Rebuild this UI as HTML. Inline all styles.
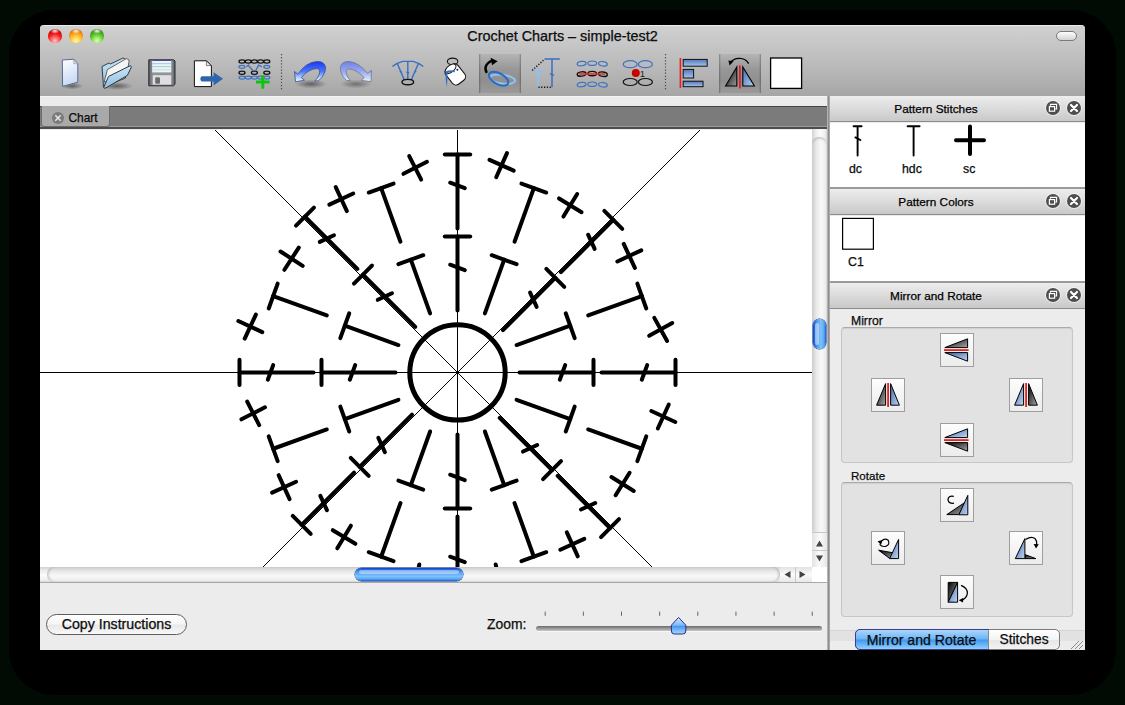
<!DOCTYPE html>
<html><head><meta charset="utf-8">
<style>
*{box-sizing:border-box}
html,body{margin:0;padding:0}
body{width:1125px;height:705px;background:#020a04;position:relative;overflow:hidden;font-family:"Liberation Sans",sans-serif;color:#000;-webkit-text-stroke:0.25px #000}
div{position:absolute}
#shadow{left:9px;top:10px;width:1107px;height:685px;background:#000;border-radius:45px}
#win{left:40px;top:25px;width:1045px;height:625px;background:#ececec;overflow:hidden;border-radius:4px 4px 0 0}
.title{left:40px;top:28px;width:1045px;text-align:center;font-size:14.4px;line-height:17px;color:#111}
.tl{top:29px;width:13.6px;height:13.6px;border-radius:50%}
.sel{top:54px;height:39px;width:42px;background:linear-gradient(90deg,rgba(0,0,0,.28) 0,rgba(0,0,0,0) 2px,rgba(0,0,0,0) 40px,rgba(0,0,0,.28) 42px),linear-gradient(#b4b4b4,#979797 40%,#8f8f8f 70%,#9a9a9a 100%)}
.sep{top:54px;height:37px;width:2px;background:repeating-linear-gradient(#555 0,#555 1.2px,transparent 1.2px,transparent 3.4px)}
.ph{left:830px;width:255px;height:26px;padding-right:43px;background:linear-gradient(#ededed,#c9c9c9);border-bottom:1.5px solid #8c8c8c;font-size:11.8px;text-align:center;line-height:27px;color:#000}
.gl{left:830px;width:255px;height:2px;background:#9a9a9a}
.hb{width:14px;height:14px;border-radius:50%;background:#4e4e4e;box-shadow:0 0 0 1px rgba(255,255,255,.5)}
.lbl{font-size:12.3px;color:#111;line-height:14px}
.box{background:#e2e2e2;border:1px solid #c6c6c6;border-top-color:#aaa;border-radius:4px;box-shadow:inset 0 1px 1px rgba(0,0,0,.08)}
.btn{width:34px;height:34px;background:linear-gradient(#fdfdfd,#ececec);border:1px solid #9e9e9e}
</style></head><body>
<div id="shadow"></div>
<div id="win"></div>
<!-- unified title/toolbar -->
<div style="left:40px;top:25px;width:1045px;height:71px;background:linear-gradient(#d1d1d1 0px,#c7c7c7 18px,#b8b8b8 44px,#a6a6a6 71px);border-radius:4px 4px 0 0"></div>
<div style="left:44px;top:25px;width:1037px;height:1px;background:#ececec"></div>
<div style="left:40px;top:96px;width:788px;height:1px;background:#f4f4f4"></div>
<div class="tl" style="left:48px;background:radial-gradient(ellipse 32% 20% at 50% 14%,rgba(255,255,255,.95),rgba(255,255,255,0) 100%),radial-gradient(circle at 50% 85%,#ffc8c8 0,#ff7a7a 22%,#f51818 52%,#c00808 80%,#7a0606 100%)"></div>
<div class="tl" style="left:69px;background:radial-gradient(ellipse 32% 20% at 50% 14%,rgba(255,255,255,.95),rgba(255,255,255,0) 100%),radial-gradient(circle at 50% 85%,#fff5a0 0,#ffe060 22%,#ffa820 52%,#e06a08 80%,#a03a04 100%)"></div>
<div class="tl" style="left:90px;background:radial-gradient(ellipse 32% 20% at 50% 14%,rgba(255,255,255,.95),rgba(255,255,255,0) 100%),radial-gradient(circle at 50% 85%,#d8ffb0 0,#a6ec78 22%,#58c028 52%,#2c9010 80%,#1a5a08 100%)"></div>
<div class="title">Crochet Charts – simple-test2</div>
<div style="left:1056px;top:31px;width:21px;height:10px;border-radius:5px;border:1px solid #7b7b7b;background:linear-gradient(#fdfdfd,#d4d4d4)"></div>
<div class="sel" style="left:479px"></div>
<div class="sel" style="left:719px"></div>
<svg style="position:absolute;left:0;top:0" width="1125" height="100"><g stroke="#4a4a4a" stroke-width="1.2" stroke-dasharray="1.2 1.9"><line x1="281.5" y1="54" x2="281.5" y2="91"/><line x1="665.5" y1="54" x2="665.5" y2="91"/></g></svg>
<svg style="position:absolute;left:0;top:0" width="1125" height="100" viewBox="0 0 1125 100">
<defs>
<linearGradient id="gdoc" x1="0" y1="0" x2="0.3" y2="1"><stop offset="0" stop-color="#ffffff"/><stop offset="1" stop-color="#c9d8f4"/></linearGradient>
<linearGradient id="gfold" x1="0" y1="0" x2="0" y2="1"><stop offset="0" stop-color="#c9e6f7"/><stop offset="1" stop-color="#8fbfdc"/></linearGradient>
<linearGradient id="gflop" x1="0" y1="0" x2="1" y2="0"><stop offset="0" stop-color="#5c6068"/><stop offset=".15" stop-color="#8e929a"/><stop offset=".85" stop-color="#90949c"/><stop offset="1" stop-color="#5a5e66"/></linearGradient>
<linearGradient id="gundo" x1="0" y1="0" x2="0" y2="1"><stop offset="0" stop-color="#1a36f0"/><stop offset=".5" stop-color="#4a78ff"/><stop offset=".8" stop-color="#b8d4ff"/><stop offset="1" stop-color="#eef6ff"/></linearGradient>
<linearGradient id="gredo" x1="0" y1="0" x2="0" y2="1"><stop offset="0" stop-color="#6f80e6"/><stop offset=".5" stop-color="#98aaee"/><stop offset=".8" stop-color="#c8d6f4"/><stop offset="1" stop-color="#eef2fa"/></linearGradient>
<linearGradient id="gbar" x1="0" y1="0" x2="0" y2="1"><stop offset="0" stop-color="#4f78bb"/><stop offset="1" stop-color="#a9c3e8"/></linearGradient>
<linearGradient id="gtriL" x1="0" y1="0" x2="1" y2="1"><stop offset="0" stop-color="#000"/><stop offset="1" stop-color="#9a9a9a"/></linearGradient>
<linearGradient id="gtriR" x1="0" y1="0" x2="1" y2="1"><stop offset="0" stop-color="#3e6cb4"/><stop offset="1" stop-color="#b9d0ef"/></linearGradient>
<radialGradient id="gsh"><stop offset="0" stop-color="#000" stop-opacity=".45"/><stop offset="1" stop-color="#000" stop-opacity="0"/></radialGradient>
</defs>
<!-- 1 new doc -->
<ellipse cx="72" cy="86" rx="11" ry="3.5" fill="url(#gsh)"/>
<path d="M62.3,60 L73.8,59.2 L77.8,63.6 L77.8,82.2 L62.6,86.4 Z" fill="url(#gdoc)" stroke="#556b94" stroke-width="1"/>
<path d="M73.6,59.6 L73.8,63.8 L77.5,63.6 Z" fill="#d8d8d8" stroke="#8c96aa" stroke-width=".6"/>
<!-- 2 folder -->
<ellipse cx="117" cy="86" rx="16" ry="4" fill="url(#gsh)"/>
<path d="M102,66.5 L109,63 L110.5,64 L123,58 L125.5,59.3 L125.5,78 L103.5,87 Z" fill="url(#gfold)" stroke="#3a3f46" stroke-width="1"/>
<path d="M104.2,82 L107.4,69.6 L126.4,58.6 L129.2,60 L127.4,72.4 L110,80.4 Z" fill="#f4f4f4" stroke="#444" stroke-width=".8"/>
<path d="M103.6,87.4 L108.6,76.4 L130.4,65.6 L131.4,67 L127.4,75.4 L105,88.4 Z" fill="url(#gfold)" stroke="#33383f" stroke-width="1"/>
<!-- 3 floppy -->
<path d="M148.8,59.8 L173.8,59.8 L175,61 L175,84.2 L173.3,85.8 L148.8,85.8 Z" fill="url(#gflop)" stroke="#26282c" stroke-width="1"/>
<rect x="152.2" y="60" width="19" height="12.4" fill="#f2f2f2"/>
<rect x="152.2" y="60" width="19" height="1" fill="#5b3fb5"/>
<rect x="152.2" y="63" width="19" height="1.2" fill="#9fd7df"/>
<rect x="152.2" y="66" width="19" height="1.2" fill="#9fd7df"/>
<rect x="152.2" y="69.2" width="19" height="1.2" fill="#b8e6ea"/>
<rect x="152.8" y="75.2" width="18.4" height="9.4" fill="#dedede"/>
<rect x="155.2" y="77.3" width="4.8" height="6.4" rx="1.2" fill="#6b6b6b"/>
<!-- 4 export -->
<path d="M194.4,60.8 L206.6,60.8 L211.4,65.6 L211.4,86.6 L194.4,86.6 Z" fill="#fff" stroke="#111" stroke-width="1"/>
<path d="M206.4,61 L206.4,65.6 L211,65.6 Z" fill="#e8e8e8" stroke="#333" stroke-width=".6"/>
<path d="M201.6,76.2 L213.6,76.2 L213.6,72.2 L223,78.8 L213.6,85.4 L213.6,81.4 L201.6,81.4 Q199,78.8 201.6,76.2 Z" fill="#2f65ae"/>
<!-- 5 rows + -->
<g fill="none" stroke-width="1.3">
<g stroke="#111"><ellipse cx="242" cy="61.5" rx="3" ry="1.6"/><ellipse cx="248.2" cy="61.5" rx="3" ry="1.6"/><ellipse cx="254.4" cy="61.5" rx="3" ry="1.6"/><ellipse cx="260.6" cy="61.5" rx="3" ry="1.6"/><ellipse cx="266.8" cy="61.5" rx="3" ry="1.6"/>
<ellipse cx="242" cy="72.7" rx="3" ry="1.6"/><ellipse cx="254.4" cy="72.7" rx="3" ry="1.6"/><ellipse cx="266.8" cy="72.7" rx="3" ry="1.6"/></g>
<g stroke="#3f73c0"><ellipse cx="242" cy="66.8" rx="3" ry="1.5"/><ellipse cx="266.8" cy="66.8" rx="3" ry="1.5"/>
<ellipse cx="242" cy="77.6" rx="3" ry="1.5"/><ellipse cx="248.2" cy="77.6" rx="3" ry="1.5"/><ellipse cx="254.4" cy="77.6" rx="3" ry="1.5"/><ellipse cx="260.6" cy="77.6" rx="3" ry="1.5"/><ellipse cx="266.8" cy="77.6" rx="3" ry="1.5"/>
<path d="M246.5,66.8 L249,64.5 M248.2,65.2 L253.4,71.2 M255.4,71.2 L258.6,65.2 L261.8,66.8"/></g>
</g>
<path d="M261.3,75.2 h3 v5.3 h5.3 v3 h-5.3 v5.3 h-3 v-5.3 h-5.3 v-3 h5.3 Z" fill="#12c212"/>
<!-- 6 undo -->
<ellipse cx="311" cy="84" rx="16" ry="4.5" fill="url(#gsh)"/>
<path d="M294.5,71.5 L295.5,81.8 L304.5,80.2 L301.2,77.6 Q309,68.5 317.5,68.6 Q320.5,69.5 319.4,74 Q317.6,78.5 314.8,81 L318.4,80.8 Q325.6,74.6 325.6,67.4 Q324.5,61.2 316.8,61.5 Q305.8,62.3 297.9,74.2 Z" fill="url(#gundo)" stroke="#3d4f86" stroke-width=".8"/>
<!-- 7 redo -->
<ellipse cx="356" cy="84" rx="16" ry="4.5" fill="url(#gsh)" opacity=".8"/>
<path d="M371.5,70.5 L371,81.6 L361.2,80.4 L364.3,77.6 Q356.8,69.5 348.5,68.8 Q345.4,69.5 346.4,74 Q348,78.6 350.6,80.6 L346.4,80.4 Q340.2,74.6 340.4,67.4 Q341.5,61.2 349.2,61.5 Q359,62.4 367.4,73.4 Z" fill="url(#gredo)" stroke="#6c7594" stroke-width=".8"/>
<!-- 8 fan -->
<g fill="none" stroke="#3a6fc2" stroke-width="1.4">
<path d="M392.4,66.5 Q397,62.8 402.6,61.4 L413.1,61.4 Q418.8,62.8 423.3,66.5"/>
<path d="M397.5,64 L404.2,79.6 M407.8,61.4 L407.8,79.2 M418.2,64 L411.4,79.6"/>
<path d="M399.8,71.2 L401.8,72.4 M406.4,72.2 L409.2,73 M414.2,72.4 L416.2,71.2"/>
</g>
<ellipse cx="407.8" cy="82.1" rx="5.8" ry="2.7" fill="none" stroke="#111" stroke-width="1.4"/>
<!-- 9 bucket -->
<ellipse cx="452.6" cy="61.4" rx="5.2" ry="3.3" fill="none" stroke="#111" stroke-width="1.1"/>
<rect x="447.6" y="64.6" width="15.4" height="19.6" rx="4.6" transform="rotate(-38 455.3 74.4)" fill="#fff" stroke="#111" stroke-width="1.1"/>
<ellipse cx="450.6" cy="68.8" rx="6.4" ry="3.4" transform="rotate(-38 450.6 68.8)" fill="#fff" stroke="#111" stroke-width="1"/>
<path d="M445.6,71.4 Q449.6,69.6 455,70.6 L454.6,72.2 Q450,71.6 447.6,73 L447,87.6 Q445.2,80.4 445.6,71.4 Z" fill="#3b6fc4"/>
<circle cx="457.4" cy="69.8" r="1" fill="#223"/>
<!-- 10 rotate -->
<path d="M486.8,72.8 Q482.6,65.4 491.6,60.8" fill="none" stroke="#000" stroke-width="2.4"/>
<path d="M490.6,57.8 L497.6,61.2 L492,65.2 Z" fill="#000"/>
<ellipse cx="502.6" cy="79.2" rx="12.6" ry="4.4" transform="rotate(8 502.6 79.2)" fill="none" stroke="#8fc3f5" stroke-width="2"/>
<ellipse cx="498.6" cy="78.8" rx="10.6" ry="5.4" transform="rotate(28 498.6 78.8)" fill="none" stroke="#2e6ec2" stroke-width="2.1"/>
<!-- 11 dc dotted -->
<g fill="none" stroke-width="1.5">
<path d="M544.8,59 L559.8,59 M552,59 L552,87.2 M550,73.6 L554,75.4" stroke="#3a6fc2"/>
<path d="M532.2,70.4 L544.2,70.4 M538.2,70.4 L538.2,87.2 M536.2,76.6 L540.2,77.6" stroke="#8cc0f4"/>
<path d="M532.2,70.4 L544.8,59 M538.4,87.2 L552,87.2" stroke="#111" stroke-dasharray="1.2 1.6"/>
</g>
<!-- 12 ovals red -->
<g fill="none" stroke-width="1.2">
<g stroke="#3f73c0"><ellipse cx="581.6" cy="63.6" rx="4.4" ry="2.2" transform="rotate(-8 581.6 63.6)"/><ellipse cx="592.2" cy="63.2" rx="4.4" ry="2.2"/><ellipse cx="602.9" cy="63.8" rx="4.4" ry="2.2" transform="rotate(8 602.9 63.8)"/>
<ellipse cx="581.6" cy="84.6" rx="4.4" ry="2.2" transform="rotate(-8 581.6 84.6)"/><ellipse cx="592.2" cy="84.2" rx="4.4" ry="2.2"/><ellipse cx="602.9" cy="84.8" rx="4.4" ry="2.2" transform="rotate(8 602.9 84.8)"/></g>
<g stroke="#111" stroke-width="1.4"><ellipse cx="581.6" cy="74" rx="4.4" ry="2.2" transform="rotate(-8 581.6 74)"/><ellipse cx="592.2" cy="73.6" rx="4.4" ry="2.2"/><ellipse cx="602.9" cy="74.2" rx="4.4" ry="2.2" transform="rotate(8 602.9 74.2)"/></g>
<path d="M579,74 L605,74" stroke="#f0262a" stroke-width="1.5"/>
</g>
<!-- 13 ovals dot -->
<g fill="none" stroke-width="1.2">
<g stroke="#3f73c0"><ellipse cx="630.2" cy="64.2" rx="7" ry="3.5"/><ellipse cx="645.4" cy="64.2" rx="7" ry="3.5"/></g>
<g stroke="#111"><ellipse cx="630.2" cy="82" rx="7" ry="3.5"/><ellipse cx="645.4" cy="82" rx="7" ry="3.5"/></g>
</g>
<circle cx="635.8" cy="72.9" r="4" fill="#cc0000"/>
<text x="639.8" y="77.2" font-family="Liberation Sans" font-size="9.6" fill="#222" style="-webkit-text-stroke:0">1</text>
<!-- 14 align left -->
<rect x="679.6" y="58" width="1.6" height="30" fill="#ee1c1c"/>
<rect x="683.2" y="59.4" width="24" height="6.8" fill="url(#gbar)" stroke="#111" stroke-width="1"/>
<rect x="683.2" y="69.4" width="10.4" height="8.6" fill="url(#gbar)" stroke="#111" stroke-width="1"/>
<rect x="683.2" y="81.2" width="19.8" height="5.5" fill="url(#gbar)" stroke="#111" stroke-width="1"/>
<!-- 15 mirror -->
<path d="M729.8,63.6 Q733,58.2 739.6,58.4 Q746,58.6 748.6,63.6" fill="none" stroke="#000" stroke-width="1.4"/>
<path d="M728.4,60.6 L733.6,61.2 L729.6,65.6 Z" fill="#000"/>
<path d="M725.6,86 L736.8,67 L736.8,86 Z" fill="url(#gtriL)" stroke="#000" stroke-width="1.1"/>
<path d="M742.8,67 L742.8,86 L754.4,86 Z" fill="url(#gtriR)" stroke="#000" stroke-width="1.1"/>
<rect x="739" y="65.4" width="1.8" height="23" fill="#ee1c1c"/>
<!-- 16 white square -->
<rect x="770.6" y="58" width="31" height="30.4" fill="#fff" stroke="#000" stroke-width="1.3"/>
</svg>

<!-- tab bar -->
<div style="left:40px;top:106px;width:787px;height:23px;background:#7b7b7b;border-top:1px solid #474747;border-bottom:2px solid #4c4c4c"></div>
<div style="left:40px;top:126px;width:788px;height:1px;background:#9a9a9a"></div>
<div style="left:40.5px;top:106px;width:69px;height:21px;background:#a9a9a9;border-radius:0 0 3px 3px;border:1px solid #6c6c6c;border-top:none"></div>
<div style="left:52px;top:112px;width:12px;height:12px;border-radius:50%;background:#7b7b7b"></div>
<svg style="position:absolute;left:52px;top:112px" width="12" height="12"><path d="M3.3,3.3L8.7,8.7M8.7,3.3L3.3,8.7" stroke="#e8e8e8" stroke-width="1.5"/></svg>
<div style="left:68.5px;top:111px;font-size:11.9px;line-height:14px;color:#111">Chart</div>
<svg style="position:absolute;left:0;top:0" width="1125" height="705" viewBox="0 0 1125 705">
<defs><clipPath id="cv"><rect x="40" y="130" width="772" height="437"/></clipPath></defs>
<g clip-path="url(#cv)">
<rect x="40" y="130" width="772" height="437" fill="#fff"/>
<rect x="40" y="372" width="772" height="1" fill="#000"/><rect x="457" y="130" width="1" height="437" fill="#000"/><g stroke="#000" stroke-width="1" shape-rendering="crispEdges"><line x1="157.5" y1="72.39999999999998" x2="757.5" y2="672.4"/><line x1="157.5" y1="672.4" x2="757.5" y2="72.39999999999998"/></g>
<circle cx="457.5" cy="372.4" r="47.7" fill="none" stroke="#000" stroke-width="5"/>
<g stroke="#000" stroke-width="4" stroke-linecap="round" fill="none"><line x1="457.50" y1="236.40" x2="457.50" y2="310.40"/><line x1="444.80" y1="236.40" x2="470.20" y2="236.40"/><line x1="450.17" y1="264.70" x2="464.83" y2="270.10"/><line x1="457.50" y1="154.40" x2="457.50" y2="228.40"/><line x1="444.80" y1="154.40" x2="470.20" y2="154.40"/><line x1="450.17" y1="182.70" x2="464.83" y2="188.10"/><line x1="504.19" y1="259.69" x2="484.88" y2="313.32"/><line x1="491.77" y1="255.22" x2="516.61" y2="264.16"/><line x1="533.85" y1="188.09" x2="514.54" y2="241.72"/><line x1="521.43" y1="183.61" x2="546.26" y2="192.56"/><line x1="555.29" y1="277.86" x2="502.97" y2="330.19"/><line x1="546.31" y1="268.88" x2="564.27" y2="286.84"/><line x1="530.10" y1="292.69" x2="536.65" y2="306.87"/><line x1="613.28" y1="219.88" x2="560.95" y2="272.20"/><line x1="604.30" y1="210.90" x2="622.26" y2="228.86"/><line x1="588.08" y1="234.71" x2="594.63" y2="248.89"/><line x1="570.21" y1="325.71" x2="516.58" y2="345.02"/><line x1="565.74" y1="313.29" x2="574.68" y2="338.13"/><line x1="641.81" y1="296.05" x2="588.18" y2="315.36"/><line x1="637.34" y1="283.64" x2="646.29" y2="308.47"/><line x1="593.50" y1="372.40" x2="519.50" y2="372.40"/><line x1="593.50" y1="359.70" x2="593.50" y2="385.10"/><line x1="565.20" y1="365.07" x2="559.80" y2="379.73"/><line x1="675.50" y1="372.40" x2="601.50" y2="372.40"/><line x1="675.50" y1="359.70" x2="675.50" y2="385.10"/><line x1="647.20" y1="365.07" x2="641.80" y2="379.73"/><line x1="570.21" y1="419.09" x2="516.58" y2="399.78"/><line x1="574.68" y1="406.67" x2="565.74" y2="431.51"/><line x1="641.81" y1="448.75" x2="588.18" y2="429.44"/><line x1="646.29" y1="436.33" x2="637.34" y2="461.16"/><line x1="552.04" y1="470.19" x2="499.71" y2="417.87"/><line x1="561.02" y1="461.21" x2="543.06" y2="479.17"/><line x1="537.21" y1="445.00" x2="523.03" y2="451.55"/><line x1="610.02" y1="528.18" x2="557.70" y2="475.85"/><line x1="619.00" y1="519.20" x2="601.04" y2="537.16"/><line x1="595.19" y1="502.98" x2="581.01" y2="509.53"/><line x1="504.19" y1="485.11" x2="484.88" y2="431.48"/><line x1="516.61" y1="480.64" x2="491.77" y2="489.58"/><line x1="533.85" y1="556.71" x2="514.54" y2="503.08"/><line x1="546.26" y1="552.24" x2="521.43" y2="561.19"/><line x1="457.50" y1="508.40" x2="457.50" y2="434.40"/><line x1="470.20" y1="508.40" x2="444.80" y2="508.40"/><line x1="464.83" y1="480.10" x2="450.17" y2="474.70"/><line x1="457.50" y1="590.40" x2="457.50" y2="516.40"/><line x1="470.20" y1="590.40" x2="444.80" y2="590.40"/><line x1="464.83" y1="562.10" x2="450.17" y2="556.70"/><line x1="410.81" y1="485.11" x2="430.12" y2="431.48"/><line x1="423.23" y1="489.58" x2="398.39" y2="480.64"/><line x1="381.15" y1="556.71" x2="400.46" y2="503.08"/><line x1="393.57" y1="561.19" x2="368.74" y2="552.24"/><line x1="359.71" y1="466.94" x2="412.03" y2="414.61"/><line x1="368.69" y1="475.92" x2="350.73" y2="457.96"/><line x1="384.90" y1="452.11" x2="378.35" y2="437.93"/><line x1="301.72" y1="524.92" x2="354.05" y2="472.60"/><line x1="310.70" y1="533.90" x2="292.74" y2="515.94"/><line x1="326.92" y1="510.09" x2="320.37" y2="495.91"/><line x1="344.79" y1="419.09" x2="398.42" y2="399.78"/><line x1="349.26" y1="431.51" x2="340.32" y2="406.67"/><line x1="273.19" y1="448.75" x2="326.82" y2="429.44"/><line x1="277.66" y1="461.16" x2="268.71" y2="436.33"/><line x1="321.50" y1="372.40" x2="395.50" y2="372.40"/><line x1="321.50" y1="385.10" x2="321.50" y2="359.70"/><line x1="349.80" y1="379.73" x2="355.20" y2="365.07"/><line x1="239.50" y1="372.40" x2="313.50" y2="372.40"/><line x1="239.50" y1="385.10" x2="239.50" y2="359.70"/><line x1="267.80" y1="379.73" x2="273.20" y2="365.07"/><line x1="344.79" y1="325.71" x2="398.42" y2="345.02"/><line x1="340.32" y1="338.13" x2="349.26" y2="313.29"/><line x1="273.19" y1="296.05" x2="326.82" y2="315.36"/><line x1="268.71" y1="308.47" x2="277.66" y2="283.64"/><line x1="362.96" y1="274.61" x2="415.29" y2="326.93"/><line x1="353.98" y1="283.59" x2="371.94" y2="265.63"/><line x1="377.79" y1="299.80" x2="391.97" y2="293.25"/><line x1="304.98" y1="216.62" x2="357.30" y2="268.95"/><line x1="296.00" y1="225.60" x2="313.96" y2="207.64"/><line x1="319.81" y1="241.82" x2="333.99" y2="235.27"/><line x1="410.81" y1="259.69" x2="430.12" y2="313.32"/><line x1="398.39" y1="264.16" x2="423.23" y2="255.22"/><line x1="381.15" y1="188.09" x2="400.46" y2="241.72"/><line x1="368.74" y1="192.56" x2="393.57" y2="183.61"/><line x1="421.19" y1="179.56" x2="409.21" y2="156.04"/><line x1="403.44" y1="173.79" x2="426.96" y2="161.81"/><line x1="346.88" y1="211.06" x2="335.72" y2="187.14"/><line x1="329.34" y1="204.68" x2="353.26" y2="193.52"/><line x1="302.67" y1="265.89" x2="280.53" y2="251.51"/><line x1="284.41" y1="269.77" x2="298.79" y2="247.63"/><line x1="262.26" y1="332.18" x2="238.34" y2="321.02"/><line x1="244.72" y1="338.56" x2="255.88" y2="314.64"/><line x1="496.23" y1="177.26" x2="506.97" y2="153.14"/><line x1="489.54" y1="159.83" x2="513.66" y2="170.57"/><line x1="563.42" y1="216.57" x2="577.18" y2="194.03"/><line x1="559.03" y1="198.42" x2="581.57" y2="212.18"/><line x1="617.34" y1="261.48" x2="641.26" y2="250.32"/><line x1="623.72" y1="243.94" x2="634.88" y2="267.86"/><line x1="649.16" y1="335.80" x2="672.24" y2="323.00"/><line x1="654.30" y1="317.86" x2="667.10" y2="340.94"/><line x1="259.19" y1="425.06" x2="247.21" y2="401.54"/><line x1="241.44" y1="419.29" x2="264.96" y2="407.31"/><line x1="289.59" y1="499.20" x2="278.61" y2="475.20"/><line x1="272.10" y1="492.69" x2="296.10" y2="481.71"/><line x1="337.30" y1="548.31" x2="350.90" y2="525.69"/><line x1="332.79" y1="530.20" x2="355.41" y2="543.80"/><line x1="657.83" y1="428.51" x2="668.77" y2="404.49"/><line x1="651.29" y1="411.03" x2="675.31" y2="421.97"/><line x1="615.61" y1="495.19" x2="629.59" y2="472.81"/><line x1="611.41" y1="477.01" x2="633.79" y2="490.99"/><line x1="577.79" y1="556.30" x2="566.81" y2="532.30"/><line x1="560.30" y1="549.79" x2="584.30" y2="538.81"/><line x1="495.70" y1="564.44" x2="500.85" y2="590.33"/><line x1="511.22" y1="574.81" x2="485.33" y2="579.96"/><line x1="419.30" y1="564.44" x2="414.15" y2="590.33"/><line x1="429.67" y1="579.96" x2="403.78" y2="574.81"/></g>
</g></svg>
<!-- scrollbars -->
<div style="left:812px;top:129px;width:15px;height:438px;background:linear-gradient(90deg,#d2d2d2,#ececec 25%,#fbfbfb 55%,#f0f0f0 85%,#d8d8d8)"></div>
<div style="left:812px;top:137px;width:15px;height:398px;border-radius:7px;background:linear-gradient(90deg,#cdcdcd,#e9e9e9 30%,#f8f8f8 60%,#ededed 90%,#d5d5d5);box-shadow:inset 0 3px 3px -2px rgba(0,0,0,.25)"></div>
<div style="left:813px;top:319px;width:13px;height:30px;border-radius:6.5px;background:linear-gradient(90deg,#0f45c8,#4f9bf0 30%,#7dc2fb 60%,#5aa8f3 85%,#1f5ad6);box-shadow:0 0 0 .5px #123c9a"></div>
<div style="left:815px;top:323px;width:4px;height:22px;border-radius:2px;background:rgba(255,255,255,.45)"></div>
<div style="left:812px;top:532px;width:15px;height:35px;background:linear-gradient(90deg,#e2e2e2,#fbfbfb 50%,#e8e8e8);border-top:1px solid #c8c8c8"></div>
<div style="left:812px;top:550px;width:15px;height:1px;background:#c8c8c8"></div>
<svg style="position:absolute;left:812px;top:536px" width="15" height="30"><path d="M4,10.5 L11,10.5 L7.5,4.5Z M4,19.5 L11,19.5 L7.5,25.5Z" fill="#444"/></svg>
<div style="left:40px;top:567px;width:772px;height:15px;background:linear-gradient(#d2d2d2,#ececec 25%,#fbfbfb 55%,#f0f0f0 85%,#d8d8d8)"></div>
<div style="left:47px;top:567px;width:733px;height:15px;border-radius:7px;background:linear-gradient(#cdcdcd,#e9e9e9 30%,#f8f8f8 60%,#ededed 90%,#d5d5d5);box-shadow:inset 3px 0 3px -2px rgba(0,0,0,.25),inset -3px 0 3px -2px rgba(0,0,0,.25)"></div>
<div style="left:355px;top:568px;width:108px;height:13px;border-radius:6.5px;background:linear-gradient(#0d44c6,#4f9bf0 30%,#7dc2fb 65%,#5aa8f3 85%,#1f5ad6);box-shadow:0 0 0 .5px #123c9a"></div>
<div style="left:359px;top:569.5px;width:100px;height:4px;border-radius:2px;background:rgba(255,255,255,.42)"></div>
<div style="left:780px;top:567px;width:32px;height:15px;background:linear-gradient(#e2e2e2,#fbfbfb 50%,#e8e8e8)"></div>
<div style="left:795px;top:567px;width:1px;height:15px;background:#c8c8c8"></div>
<svg style="position:absolute;left:780px;top:567px" width="32" height="15"><path d="M10.5,4 L10.5,11 L4.5,7.5Z M19.5,4 L19.5,11 L25.5,7.5Z" fill="#444"/></svg>
<div style="left:812px;top:567px;width:15px;height:15px;background:#fff"></div>
<div style="left:40px;top:582px;width:788px;height:1px;background:#a9a9a9"></div>
<!-- panel divider -->
<div style="left:827px;top:96px;width:3px;height:554px;background:linear-gradient(90deg,#b4b4b4 0,#b4b4b4 33%,#8e8e8e 33%,#8e8e8e 80%,#a8a8a8 80%)"></div>
<!-- right panel -->
<div class="ph" style="top:96px">Pattern Stitches</div>
<div style="left:830px;top:122.5px;width:255px;height:64.5px;background:#fff"></div>
<div class="gl" style="top:187px"></div>
<div class="ph" style="top:189px">Pattern Colors</div>
<div style="left:830px;top:215.5px;width:255px;height:65.5px;background:#fff"></div>
<div class="gl" style="top:281px"></div>
<div class="ph" style="top:283px">Mirror and Rotate</div>
<div style="left:830px;top:309.5px;width:255px;height:340.5px;background:#ececec"></div>
<!-- header buttons -->
<div class="hb" style="left:1046px;top:101px"></div><div class="hb" style="left:1067px;top:101px"></div>
<div class="hb" style="left:1046px;top:194px"></div><div class="hb" style="left:1067px;top:194px"></div>
<div class="hb" style="left:1046px;top:288px"></div><div class="hb" style="left:1067px;top:288px"></div>
<svg style="position:absolute;left:0;top:0" width="1125" height="705" viewBox="0 0 1125 705">
<defs>
<g id="flt"><path d="M-2.6,-2.2 L-2.6,-3.6 L3.6,-3.6 L3.6,1 L2.2,1" fill="none" stroke="#fff" stroke-width="1.1"/><rect x="-3.6" y="-1.4" width="5.2" height="4.6" fill="none" stroke="#fff" stroke-width="1.2"/></g>
<g id="cls"><path d="M-3,-3 L3,3 M3,-3 L-3,3" stroke="#fff" stroke-width="2.2" stroke-linecap="round"/></g>
<linearGradient id="mL" x1="0" y1="0" x2="1" y2="1"><stop offset="0" stop-color="#000"/><stop offset="1" stop-color="#aaa"/></linearGradient>
<linearGradient id="mR" x1="0" y1="0" x2="1" y2="1"><stop offset="0" stop-color="#3966b0"/><stop offset="1" stop-color="#c4d6f0"/></linearGradient>
</defs>
<use href="#flt" x="1053" y="108"/><use href="#cls" x="1074" y="108"/>
<use href="#flt" x="1053" y="201"/><use href="#cls" x="1074" y="201"/>
<use href="#flt" x="1053" y="295"/><use href="#cls" x="1074" y="295"/>
<!-- stitches panel -->
<g stroke="#000" fill="none" stroke-linecap="round">
<path d="M853.6,126.3 L861.6,126.3 M857.6,126.3 L857.6,155.6 M855.4,137.4 L860.4,140" stroke-width="1.9"/>
<path d="M907.6,126.3 L919.6,126.3 M913.6,126.3 L913.6,155.6" stroke-width="1.9"/>
<path d="M956,140.2 L984,140.2 M970,126.6 L970,154" stroke-width="4"/>
</g>
<!-- C1 swatch -->
<rect x="842.6" y="218.4" width="30.8" height="30.8" fill="#fff" stroke="#000" stroke-width="1.2"/>
</svg>
<div class="lbl" style="left:849px;top:162px">dc</div>
<div class="lbl" style="left:902px;top:162px">hdc</div>
<div class="lbl" style="left:963px;top:162px">sc</div>
<div class="lbl" style="left:848px;top:255px">C1</div>
<!-- mirror group -->
<div class="lbl" style="left:851px;top:314px;font-size:12.2px">Mirror</div>
<div class="box" style="left:841px;top:326.8px;width:232px;height:136px"></div>
<div class="btn" style="left:940px;top:333px"></div>
<div class="btn" style="left:871px;top:378px"></div>
<div class="btn" style="left:1009px;top:378px"></div>
<div class="btn" style="left:940px;top:423px"></div>
<div class="lbl" style="left:851px;top:469px;font-size:11.6px">Rotate</div>
<div class="box" style="left:841px;top:482px;width:232px;height:135px"></div>
<div class="btn" style="left:940px;top:487.5px"></div>
<div class="btn" style="left:871px;top:531px"></div>
<div class="btn" style="left:1009px;top:531px"></div>
<div class="btn" style="left:940px;top:575px"></div>
<svg style="position:absolute;left:0;top:0" width="1125" height="705" viewBox="0 0 1125 705">
<g stroke="#000" stroke-width="1">
<!-- mirror top: triangles pointing left, horizontal red line -->
<path d="M944.8,347.6 L967.6,338.8 L967.6,347.6 Z" fill="url(#mL)"/>
<path d="M944.8,352.6 L967.6,352.6 L967.6,361.2 Z" fill="url(#mR)"/>
<!-- mirror bottom -->
<path d="M944.8,437.6 L967.6,428.8 L967.6,437.6 Z" fill="url(#mR)"/>
<path d="M944.8,442.6 L967.6,442.6 L967.6,451.2 Z" fill="url(#mL)"/>
<!-- mirror left -->
<path d="M876.6,405.2 L885.6,383.6 L885.6,405.2 Z" fill="url(#mL)"/>
<path d="M890.6,383.6 L890.6,405.2 L899.4,405.2 Z" fill="url(#mR)"/>
<!-- mirror right -->
<path d="M1014.6,405.2 L1023.6,383.6 L1023.6,405.2 Z" fill="url(#mR)"/>
<path d="M1028.6,383.6 L1028.6,405.2 L1037.4,405.2 Z" fill="url(#mL)"/>
</g>
<g fill="#e8201c">
<rect x="944" y="349.2" width="24.6" height="1.8"/>
<rect x="944" y="439.2" width="24.6" height="1.8"/>
<rect x="887.2" y="383" width="1.8" height="24"/>
<rect x="1025.2" y="383" width="1.8" height="24"/>
</g>
<!-- rotate icons -->
<g stroke="#000" stroke-width="1" stroke-linejoin="round">
<path d="M946.8,514.6 L965.8,501.8 L958.8,514.6 Z" fill="url(#mL)"/>
<path d="M958.8,514.8 L967.8,495.4 L967.8,514.8 Z" fill="url(#mR)"/>
<path d="M953.8,496.4 Q948,495.4 948,499.8 Q948.4,503.8 954,503.2" fill="none" stroke-width="1.3"/>
<path d="M878.6,550.2 L897.6,553.6 L889.6,558.4 Z" fill="url(#mL)"/>
<path d="M889.6,558.6 L898.6,539.4 L898.6,558.6 Z" fill="url(#mR)"/>
<path d="M881.4,541.2 Q884.8,537.4 888.2,540.2 Q890.4,544.6 885.6,546.4 Q881.6,547 879.6,544.4" fill="none" stroke-width="1.2"/>
<path d="M1024.9,554.6 L1035.8,558.6 L1024.9,558.6 Z" fill="url(#mL)"/>
<path d="M1015.3,558.6 L1024.9,538.6 L1024.9,558.6 Z" fill="url(#mR)"/>
<path d="M1025.6,539.6 Q1031.6,535.4 1035.2,538.8 Q1037.4,541.4 1036.4,545" fill="none" stroke-width="1.2"/>
<path d="M948.2,582.4 L957.6,582.4 L948.2,602.2 Z" fill="url(#mL)"/>
<path d="M957.6,582.4 L957.6,602.2 L948.2,602.2 Z" fill="url(#mR)"/>
<path d="M961,585.4 Q967.6,588 967.4,593.4 Q966.6,598.6 961.4,600.4" fill="none" stroke-width="1.2"/>
</g>
<g fill="#000">
<path d="M877.6,541.2 L882.6,540 L881,545 Z"/>
<path d="M1033.6,544 L1038.8,544.2 L1036,548.6 Z"/>
<path d="M963.4,597.8 L963,602.6 L958.8,600.2 Z"/>
</g>
<!-- resize grip -->
<g stroke="#8a8a8a" stroke-width="1">
<path d="M1071,649 L1083,637 M1075,649 L1083,641 M1079,649 L1083,645"/>
</g>
</svg>
<!-- segmented control -->
<div style="left:830px;top:629.5px;width:255px;height:11px;background:#e2e2e2;border-top:1px solid #d4d4d4"></div>
<div style="left:855px;top:629px;width:205px;height:21px;border:1px solid #7b7b7b;border-radius:5px;background:linear-gradient(#ffffff,#f4f4f4 50%,#e6e6e6 51%,#f3f3f3)"></div>
<div style="left:856px;top:630px;width:132px;height:19px;border-radius:4px 0 0 4px;background:linear-gradient(#a9d6fb,#6db5f5 48%,#3e97ef 52%,#8fd0fb)"></div>
<div style="left:855px;top:629px;width:134px;height:21px;border:1px solid #3d3c8f;border-radius:5px 0 0 5px"></div>
<div style="left:988px;top:630px;width:1px;height:19px;background:#8a8a8a"></div>
<div style="left:855px;top:631.5px;width:133px;text-align:center;font-size:14.1px;line-height:16px;color:#111">Mirror and Rotate</div>
<div style="left:988px;top:631.5px;width:72px;text-align:center;font-size:13.8px;line-height:16px;color:#111">Stitches</div>

<!-- bottom -->
<div style="left:46px;top:614px;width:141px;height:21px;border-radius:10.5px;border:1px solid #5e5e5e;background:linear-gradient(#ffffff,#f6f6f6 45%,#e9e9e9 55%,#f4f4f4 90%,#fafafa);font-size:14.2px;text-align:center;line-height:19px;color:#111">Copy Instructions</div>
<div style="left:487px;top:616px;font-size:13.9px;line-height:16px;color:#111">Zoom:</div>
<div style="left:536px;top:625.5px;width:286px;height:5px;border-radius:2.5px;background:linear-gradient(#6a6a6a,#9a9a9a 50%,#c8c8c8);box-shadow:0 1px 0 #f8f8f8"></div>
<svg style="position:absolute;left:0;top:0" width="1125" height="705" viewBox="0 0 1125 705">
<defs><linearGradient id="gth" x1="0" y1="0" x2="0" y2="1"><stop offset="0" stop-color="#d6ecff"/><stop offset=".45" stop-color="#7fbdf8"/><stop offset=".55" stop-color="#4b9af0"/><stop offset="1" stop-color="#a6dcff"/></linearGradient></defs>
<g fill="#666">
<rect x="544.70" y="611.6" width="1" height="4.2"/><rect x="582.85" y="611.6" width="1" height="4.2"/><rect x="621.00" y="611.6" width="1" height="4.2"/><rect x="659.15" y="611.6" width="1" height="4.2"/><rect x="697.30" y="611.6" width="1" height="4.2"/><rect x="735.45" y="611.6" width="1" height="4.2"/><rect x="773.60" y="611.6" width="1" height="4.2"/><rect x="811.75" y="611.6" width="1" height="4.2"/>
</g>
<path d="M671.4,625.2 L678.6,617.4 L685.8,625.2 L685.8,631 Q685.8,634 682.8,634 L674.4,634 Q671.4,634 671.4,631 Z" fill="url(#gth)" stroke="#2b2d8a" stroke-width="1"/>
</svg>

</body></html>
